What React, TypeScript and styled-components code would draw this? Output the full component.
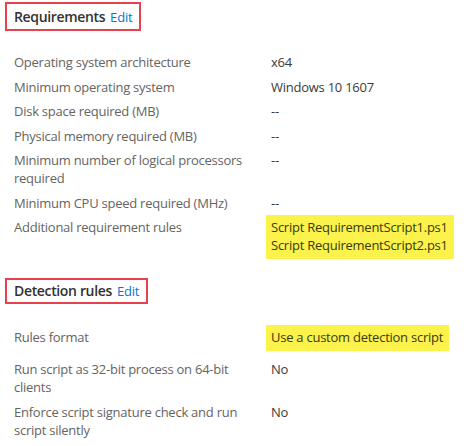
import React from "react";
import styled, { createGlobalStyle } from "styled-components";

const GlobalStyle = createGlobalStyle`
  body {
    margin: 0;
    background: #ffffff;
    font-family: "Segoe UI", "Open Sans", "Noto Sans", sans-serif;
  }
`;

const Page = styled.div`
  width: 474px;
  height: 446px;
  padding: 2px 0 0 5px;
  box-sizing: border-box;
  overflow: hidden;
`;

const Section = styled.section<{ $gap: number }>`
  margin-bottom: ${(p) => p.$gap}px;
`;

const Header = styled.div<{ $height: number }>`
  display: inline-flex;
  align-items: center;
  gap: 5px;
  height: ${(p) => p.$height}px;
  box-sizing: border-box;
  padding: 0 7px;
  border: 2px solid #e8414e;
`;

const Title = styled.h2`
  margin: 0;
  font-size: 14px;
  font-weight: 600;
  color: #323130;
  letter-spacing: -0.35px;
`;

const EditLink = styled.a`
  font-size: 13px;
  color: #0078d4;
  text-decoration: none;
  letter-spacing: -0.2px;
  cursor: pointer;
`;

const Rows = styled.div<{ $top: number }>`
  display: grid;
  grid-template-columns: 243px 1fr;
  column-gap: 14px;
  margin-top: ${(p) => p.$top}px;
  padding-left: 9px;
`;

const Label = styled.div`
  padding: 3px 0 3.5px;
  font-size: 13px;
  line-height: 18px;
  color: #66645f;
  letter-spacing: -0.25px;
`;

const Value = styled.div`
  padding: 3px 0 3.5px;
  font-size: 13px;
  line-height: 18px;
  color: #3b3a39;
  letter-spacing: -0.25px;
`;

const Marked = styled.span`
  display: inline-block;
  margin: -3px 0 3px -5px;
  padding: 3px 6px 5px 5px;
  background: #fbf24c;
  color: #3a3a10;
`;

type Row = { label: string; value: string[]; marked?: boolean };

const requirements: Row[] = [
  { label: "Operating system architecture", value: ["x64"] },
  { label: "Minimum operating system", value: ["Windows 10 1607"] },
  { label: "Disk space required (MB)", value: ["--"] },
  { label: "Physical memory required (MB)", value: ["--"] },
  { label: "Minimum number of logical processors required", value: ["--"] },
  { label: "Minimum CPU speed required (MHz)", value: ["--"] },
  {
    label: "Additional requirement rules",
    value: ["Script RequirementScript1.ps1", "Script RequirementScript2.ps1"],
    marked: true,
  },
];

const detection: Row[] = [
  { label: "Rules format", value: ["Use a custom detection script"], marked: true },
  { label: "Run script as 32-bit process on 64-bit clients", value: ["No"] },
  { label: "Enforce script signature check and run script silently", value: ["No"] },
];

const RowList = ({ rows, top }: { rows: Row[]; top: number }) => (
  <Rows $top={top}>
    {rows.map((r) => (
      <React.Fragment key={r.label}>
        <Label>{r.label}</Label>
        <Value>
          {r.marked ? (
            <Marked>
              {r.value.map((v) => (
                <div key={v}>{v}</div>
              ))}
            </Marked>
          ) : (
            r.value.map((v) => <div key={v}>{v}</div>)
          )}
        </Value>
      </React.Fragment>
    ))}
  </Rows>
);

export default function App() {
  return (
    <>
      <GlobalStyle />
      <Page>
        <Section $gap={12}>
          <Header $height={29}>
            <Title>Requirements</Title>
            <EditLink>Edit</EditLink>
          </Header>
          <RowList rows={requirements} top={19} />
        </Section>
        <Section $gap={0}>
          <Header $height={26}>
            <Title>Detection rules</Title>
            <EditLink>Edit</EditLink>
          </Header>
          <RowList rows={detection} top={21} />
        </Section>
      </Page>
    </>
  );
}
